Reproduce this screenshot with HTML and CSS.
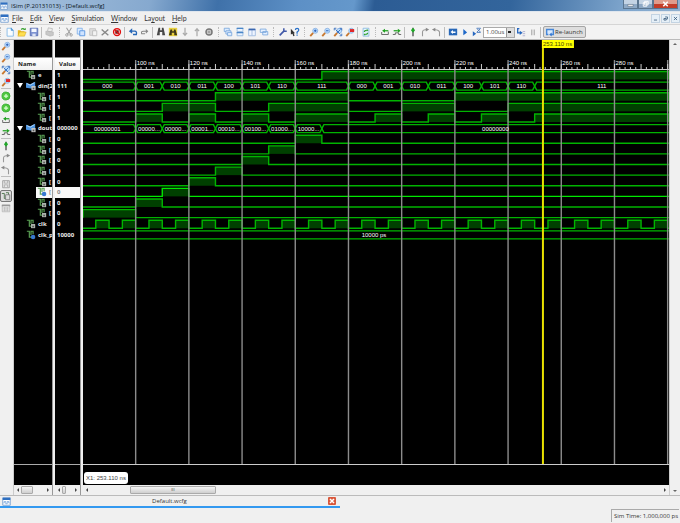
FILE: index.html
```html
<!DOCTYPE html>
<html lang="en">
<head>
   <meta charset="UTF-8">
   <meta name="viewport" content="width=device-width, initial-scale=1.0">
   <title>ISim (P.20131013) - [Default.wcfg]</title>
   <link rel="stylesheet" href="styles.css">
</head>
<body>
   <svg class="symbols" aria-hidden="true">
      <symbol id="app" viewBox="0 0 12 12"><path d="M1 1h10v10H1z" fill="#fff" stroke="#5f8fc8"/><path d="M1 1h10v3H1z" fill="#2f6fc0"/><path d="M2 8h1V6h2v3h2V6h2v2h1" fill="none" stroke="#6f9fd8"/></symbol>
      <symbol id="new" viewBox="0 0 12 12"><path d="M2.500 1.500h5l2.500 2.500v7h-7.500z" fill="#fafdff" stroke="#7db4e6"/><path d="M7.500 1v3H10" fill="#5fa3e0" stroke="#4a90d0"/></symbol>
      <symbol id="open" viewBox="0 0 12 12"><path d="M1 4h3l1 1h4v5H1z" fill="#e8b820"/><path d="M3 6h8l-2 5H1z" fill="#ffdf50" stroke="#c89a10" stroke-width=".5"/><path d="M5 3q2-2 4 0" fill="none" stroke="#3aa030" stroke-width="1.500"/><path d="M7.500 3.500h3V1z" fill="#3aa030"/></symbol>
      <symbol id="save" viewBox="0 0 12 12"><path d="M1.500 1.500h9v9h-9z" fill="#7f94d2" stroke="#5268b0"/><path d="M3 2h6v4H3z" fill="#f4f7ff"/><path d="M4 8h4v3H4z" fill="#dfe5f5"/></symbol>
      <symbol id="print" viewBox="0 0 12 12"><path d="M4 1l5 1-1 4-5-1z" fill="#eee" stroke="#bbb"/><path d="M1 5l9 1v4l-4 1-5-2z" fill="#c8c8c8" stroke="#aaa" stroke-width=".6"/></symbol>
      <symbol id="cut" viewBox="0 0 12 12"><path d="M3 1l5 8M9 1L4 9" stroke="#a0a0a0" stroke-width="1.300"/><g fill="none" stroke="#999"><circle cx="3.500" cy="9.500" r="1.500"/><circle cx="8.500" cy="9.500" r="1.500"/></g></symbol>
      <symbol id="copy" viewBox="0 0 12 12"><path d="M1.500 1.500h6v7h-6z" fill="#dcebff" stroke="#7dafe8"/><path d="M4.500 4.500h6v6h-6z" fill="#cfe3ff" stroke="#4f8fe0"/></symbol>
      <symbol id="paste" viewBox="0 0 12 12"><path d="M2 2h7v8H2z" fill="#ddd" stroke="#c0c0c0"/><path d="M5.500 4.500h5v6h-5z" fill="#f3f3f3" stroke="#bbb"/></symbol>
      <symbol id="delete" viewBox="0 0 12 12"><path d="M2 3l8 7M10 3l-8 7" stroke="#888" stroke-width="1.600"/></symbol>
      <symbol id="nobp" viewBox="0 0 12 12"><circle cx="6" cy="6" r="4.200" fill="#fbb" stroke="#e01010" stroke-width="1.500"/><path d="M4 4h4v4H4z" fill="#502020"/><path d="M3 3l6 6" stroke="#e01010" stroke-width="1.300"/></symbol>
      <symbol id="undo" viewBox="0 0 12 12"><path d="M4 5h4q3 0 2 4H6" fill="none" stroke="#2868b8" stroke-width="1.600"/><path d="M1 5l4-3.500V8z" fill="#2868b8"/></symbol>
      <symbol id="redo" viewBox="0 0 12 12"><path d="M8 5H4q-3 0-2 3h4" fill="none" stroke="#888" stroke-width="1.300"/><path d="M10 5L7 2.500V8z" fill="#888"/></symbol>
      <symbol id="find" viewBox="0 0 12 12"><path d="M3 1h2v3h2V1h2l2 9H7.500V6h-3v4H1z" fill="#484848"/></symbol>
      <symbol id="findfiles" viewBox="0 0 12 12"><path d="M1 1h10v10H1z" fill="#e8d040"/><path d="M3 3h2v2h2V3h2l2 7H7.500V7h-3v3H1z" fill="#403818"/></symbol>
      <symbol id="down" viewBox="0 0 12 12"><path d="M6 1v8M3.500 7L6 10l2.500-3" fill="none" stroke="#aaa" stroke-width="1.500"/></symbol>
      <symbol id="up" viewBox="0 0 12 12"><path d="M6 11V3M3.500 5L6 2l2.500 3" fill="none" stroke="#aaa" stroke-width="1.500"/></symbol>
      <symbol id="goto" viewBox="0 0 12 12"><circle cx="6" cy="6" r="3.600" fill="#ddd" stroke="#777" stroke-width="1.800"/><path d="M4 6h4M6 4v4" stroke="#888"/></symbol>
      <symbol id="cascade" viewBox="0 0 12 12"><g fill="#dcecff" stroke="#78a6dc"><path d="M1.500 1.500h6v4h-6z"/><path d="M3.500 4.500h6v4h-6z"/><path d="M5.500 6.500h5v4h-5z"/></g></symbol>
      <symbol id="tileh" viewBox="0 0 12 12"><path d="M2.500 1.500h7v4h-7zM2.500 6.500h7v4h-7z" fill="#eaf3ff" stroke="#8fb4e0"/><path d="M2 1h8v1.500H2zM2 6h8v1.500H2z" fill="#4a86c8"/></symbol>
      <symbol id="tilev" viewBox="0 0 12 12"><path d="M2 2.500h8v8H2zM6 3v7" fill="#eef4ff" stroke="#9bb8dd"/><path d="M2 2h8v2H2z" fill="#3c68b0"/></symbol>
      <symbol id="float" viewBox="0 0 12 12"><path d="M1.500 2.500h7v4h-7zM4.500 5.500h6v4h-6z" fill="#e6f1ff" stroke="#78a6dc"/></symbol>
      <symbol id="wrench" viewBox="0 0 12 12"><path d="M2 10l5-5" stroke="#4058a8" stroke-width="2"/><path d="M7 1.500v3.500h3.500" fill="none" stroke="#4058a8" stroke-width="1.800"/></symbol>
      <symbol id="help" viewBox="0 0 12 12"><path d="M1 2v7l2-1 1 3 1.500-.5-1-3H6z" fill="#333"/><path d="M6.500 3.500q0-2 2-2t2 2q0 1-2 2.500v2M8.500 9v1.500" fill="none" stroke="#2870c8" stroke-width="1.500"/></symbol>
      <symbol id="lens" viewBox="0 0 12 12"><path d="M1.500 11L5 7" stroke="#c87830" stroke-width="2.200"/><circle cx="7.500" cy="4.500" r="3" fill="#b8dcff" stroke="#88aee0"/></symbol>
      <symbol id="zoomin" viewBox="0 0 12 12"><use href="#lens"/><path d="M6 4.500h3M7.500 3v3" stroke="#1f50b0"/></symbol>
      <symbol id="zoomout" viewBox="0 0 12 12"><use href="#lens"/><path d="M6 4.500h3" stroke="#1f50b0"/></symbol>
      <symbol id="zoomfit" viewBox="0 0 12 12"><use href="#lens"/><path d="M1.500 4V1.500H4M8 1.500h2.500V4M10.500 8v2.500H8M3 3l6 6M9 3L5 7" fill="none" stroke="#2460b8"/></symbol>
      <symbol id="zoomcur" viewBox="0 0 12 12"><use href="#lens"/><path d="M6 2.500h5v3.500H6z" fill="#e02828"/></symbol>
      <symbol id="refresh" viewBox="0 0 12 12"><path d="M2.500 1.500h7v9.500h-7z" fill="#e8f5ff" stroke="#85b8e0"/><path d="M4 6q0-2 3-2M8 7q0 2-3 2" fill="none" stroke="#30a030" stroke-width="1.300"/><path d="M7 2.500v3l2-1.500zM5 7.500v3L3 9z" fill="#30a030"/></symbol>
      <symbol id="prevedge" viewBox="0 0 12 12"><path d="M2 6v3h8V5.500" fill="none" stroke="#555"/><path d="M5 4.500h5" stroke="#20a020" stroke-width="1.500"/><path d="M6 2v5L2.500 4.500z" fill="#20a020"/></symbol>
      <symbol id="nextedge" viewBox="0 0 12 12"><path d="M1 9h3V7h4v2h3" fill="none" stroke="#555"/><path d="M2 4.500h5" stroke="#20a020" stroke-width="1.500"/><path d="M7 2v5l3.500-2.500z" fill="#20a020"/></symbol>
      <symbol id="marker" viewBox="0 0 12 12"><path d="M6 1v10" stroke="#444" stroke-width="1.500"/><path d="M3.500 4L6 1l2.500 3L6 7z" fill="#20a828"/></symbol>
      <symbol id="prevmark" viewBox="0 0 12 12"><path d="M3 11V6q0-3 6-3" fill="none" stroke="#999" stroke-width="1.300"/><path d="M7 1v4.500L11 3z" fill="#888"/></symbol>
      <symbol id="nextmark" viewBox="0 0 12 12"><path d="M1 3q7 0 8 3v5" fill="none" stroke="#999" stroke-width="1.300"/><path d="M4 1v4.500L0 3z" fill="#888"/></symbol>
      <symbol id="addmark" viewBox="0 0 12 12"><circle cx="6" cy="6" r="4.800" fill="#4fc840" stroke="#35aa30"/><path d="M3.500 6h5M6 3.500v5" stroke="#d8ffd0" stroke-width="1.500"/></symbol>
      <symbol id="restart" viewBox="0 0 12 12"><path d="M1 2h10v8H1z" fill="#2868b8"/><path d="M6 3.500v5L3 6zM6 5.300h3v2H6" fill="#fff"/></symbol>
      <symbol id="run" viewBox="0 0 12 12"><path d="M4 2.500L8.500 6.500 4 10z" fill="#1f68c8"/></symbol>
      <symbol id="runfor" viewBox="0 0 12 12"><path d="M1 5l4 3-4 3z" fill="#2868c0"/><path d="M5.500 1.500h5M5.500 6.500h5M6 2l4 4M10 2L6 6" fill="none" stroke="#3c70b8"/></symbol>
      <symbol id="step" viewBox="0 0 12 12"><path d="M4 2H2v5h3" fill="none" stroke="#2868c0" stroke-width="1.600"/><path d="M4.500 4.500v5L8 7z" fill="#2868c0"/><path d="M8 5.500h3M8 8h3M8 10.500h3" stroke="#aac"/></symbol>
      <symbol id="pause" viewBox="0 0 12 12"><path d="M4.500 3v7M7.500 3v7" stroke="#b0b0b0" stroke-width="1.500"/></symbol>
      <symbol id="relaunch" viewBox="0 0 12 12"><path d="M4 9H2V3h8v6H7" fill="#d8eaff" stroke="#4888d8" stroke-width="1.700"/><path d="M8 6.500v5L5 9z" fill="#3878d0"/></symbol>
      <symbol id="disk" viewBox="0 0 12 12"><path d="M2 2h8v8.500H2z" fill="#e8e8e8" stroke="#999"/><path d="M4 2v3h4V2M4 10V7h4v3" fill="none" stroke="#aaa"/></symbol>
      <symbol id="snap" viewBox="0 0 12 12"><path d="M1 3h3v6h3M6 2h3v3" fill="none" stroke="#447044"/><path d="M5.500 4.500h5v6h-5z" fill="#ddd" stroke="#777"/></symbol>
      <symbol id="grid" viewBox="0 0 12 12"><path d="M1.500 2.500h9v8h-9zM2 6h8M2 8.500h8M4.500 5v5M7.500 5v5" fill="#f7f7f7" stroke="#b5b5b5"/><path d="M1 2h10v2H1z" fill="#999"/></symbol>
      <symbol id="sig" viewBox="0 0 12 12"><path d="M1 1.500h3v7h3M6 6V1.500h2.500V5" fill="none" stroke="#5aa054" stroke-width="1.400"/><path d="M6 6h5v5H6z" fill="#aab0aa"/><path d="M7.500 8h2v2h-2z" fill="#555"/></symbol>
      <symbol id="const" viewBox="0 0 12 12"><path d="M1 1.500h3v7h3M6 6V1.500h2.500V5" fill="none" stroke="#5aa054" stroke-width="1.400"/><circle cx="8.500" cy="8.500" r="2.700" fill="#3878d0"/></symbol>
      <symbol id="bus" viewBox="0 0 12 12"><path d="M0 2l5 2 6-3v7L6 9 0 8z" fill="#4d94e0"/><path d="M1 3l4 2 5-3" fill="none" stroke="#c4e2ff"/><path d="M6.500 6h5v5h-5z" fill="#c4c4c4"/><path d="M8 8h2v2H8z" fill="#555"/></symbol>
      <symbol id="left" viewBox="0 0 6 6"><path d="M4 1v4L2 3z" fill="#444"/></symbol>
      <symbol id="right" viewBox="0 0 6 6"><path d="M2 1v4l2-2z" fill="#444"/></symbol>
   </svg>

   <header class="titlebar">
      <svg class="app-icon"><use href="#app"/></svg>
      <h1>ISim (P.20131013) - [Default.wcfg]</h1>
      <div class="window-buttons">
         <button aria-label="Minimize"><svg viewBox="0 0 14 9"><path d="M4 5h6v2H4z" fill="#fff" stroke="#456" stroke-width=".5"/></svg></button>
         <button aria-label="Restore"><svg viewBox="0 0 14 9"><path d="M6 1.500h4v4H6zM4.500 3h4v4h-4z" fill="none" stroke="#fff"/></svg></button>
         <button class="close" aria-label="Close"><svg viewBox="0 0 14 9"><path d="M4.500 2l5 5M9.500 2l-5 5" stroke="#fff" stroke-width="1.700"/></svg></button>
      </div>
   </header>

   <nav class="menubar">
      <svg class="app-icon"><use href="#app"/></svg>
      <button><u>F</u>ile</button>
      <button><u>E</u>dit</button>
      <button><u>V</u>iew</button>
      <button><u>S</u>imulation</button>
      <button><u>W</u>indow</button>
      <button>La<u>y</u>out</button>
      <button><u>H</u>elp</button>
      <div class="mdi-buttons">
         <button aria-label="Minimize document"><svg viewBox="0 0 9 9"><path d="M2.500 6.500h4" stroke="#357"/></svg></button>
         <button aria-label="Restore document"><svg viewBox="0 0 9 9"><path d="M4 2.500h3v3M2.500 4.500h3v2h-3z" fill="none" stroke="#357"/></svg></button>
         <button aria-label="Close document"><svg viewBox="0 0 9 9"><path d="M2.500 2.500l4 4M6.500 2.500l-4 4" stroke="#357"/></svg></button>
      </div>
   </nav>

   <div class="toolbar">
      <div class="group">
         <button aria-label="New"><svg><use href="#new"/></svg></button>
         <button aria-label="Open"><svg><use href="#open"/></svg></button>
         <button aria-label="Save"><svg><use href="#save"/></svg></button>
         <span class="sep"></span>
         <button aria-label="Print"><svg><use href="#print"/></svg></button>
      </div>
      <div class="group">
         <button aria-label="Cut"><svg><use href="#cut"/></svg></button>
         <button aria-label="Copy"><svg><use href="#copy"/></svg></button>
         <button aria-label="Paste"><svg><use href="#paste"/></svg></button>
         <button aria-label="Delete"><svg><use href="#delete"/></svg></button>
         <button aria-label="Delete all breakpoints"><svg><use href="#nobp"/></svg></button>
         <span class="sep"></span>
         <button aria-label="Undo"><svg><use href="#undo"/></svg></button>
         <button aria-label="Redo"><svg><use href="#redo"/></svg></button>
         <span class="sep"></span>
         <button aria-label="Find"><svg><use href="#find"/></svg></button>
         <button aria-label="Find in files"><svg><use href="#findfiles"/></svg></button>
         <button aria-label="Find next"><svg><use href="#down"/></svg></button>
         <button aria-label="Find previous"><svg><use href="#up"/></svg></button>
         <button aria-label="Go to"><svg><use href="#goto"/></svg></button>
      </div>
      <div class="group">
         <button aria-label="Cascade"><svg><use href="#cascade"/></svg></button>
         <button aria-label="Tile horizontally"><svg><use href="#tileh"/></svg></button>
         <button aria-label="Tile vertically"><svg><use href="#tilev"/></svg></button>
         <button aria-label="Float"><svg><use href="#float"/></svg></button>
      </div>
      <div class="group">
         <button aria-label="Preferences"><svg><use href="#wrench"/></svg></button>
         <button aria-label="What's this"><svg><use href="#help"/></svg></button>
      </div>
      <div class="group">
         <button aria-label="Zoom in"><svg><use href="#zoomin"/></svg></button>
         <button aria-label="Zoom out"><svg><use href="#zoomout"/></svg></button>
         <button aria-label="Zoom to full view"><svg><use href="#zoomfit"/></svg></button>
         <button aria-label="Zoom to cursor"><svg><use href="#zoomcur"/></svg></button>
         <span class="sep"></span>
         <button aria-label="Refresh"><svg><use href="#refresh"/></svg></button>
      </div>
      <div class="group">
         <button aria-label="Previous transition"><svg><use href="#prevedge"/></svg></button>
         <button aria-label="Next transition"><svg><use href="#nextedge"/></svg></button>
         <span class="sep"></span>
         <button aria-label="Add marker"><svg><use href="#marker"/></svg></button>
         <button aria-label="Previous marker"><svg><use href="#prevmark"/></svg></button>
         <button aria-label="Next marker"><svg><use href="#nextmark"/></svg></button>
         <span class="sep"></span>
         <button aria-label="Restart"><svg><use href="#restart"/></svg></button>
         <button aria-label="Run all"><svg><use href="#run"/></svg></button>
         <button aria-label="Run for time"><svg><use href="#runfor"/></svg></button>
         <select class="run-time" aria-label="Run time"><option>1.00us</option></select>
         <button aria-label="Step"><svg><use href="#step"/></svg></button>
         <button aria-label="Break"><svg><use href="#pause"/></svg></button>
         <span class="sep"></span>
         <button class="relaunch"><svg><use href="#relaunch"/></svg>Re-launch</button>
      </div>
   </div>

   <main>
      <div class="side-tools">
         <button aria-label="Zoom in"><svg><use href="#zoomin"/></svg></button>
         <button aria-label="Zoom out"><svg><use href="#zoomout"/></svg></button>
         <button aria-label="Zoom to full view"><svg><use href="#zoomfit"/></svg></button>
         <button aria-label="Zoom to cursor"><svg><use href="#zoomcur"/></svg></button>
         <span class="sep"></span>
         <button aria-label="Go to time 0"><svg><use href="#addmark"/></svg></button>
         <button aria-label="Go to latest time"><svg><use href="#addmark"/></svg></button>
         <button aria-label="Previous transition"><svg><use href="#prevedge"/></svg></button>
         <button aria-label="Next transition"><svg><use href="#nextedge"/></svg></button>
         <span class="sep"></span>
         <button aria-label="Add marker"><svg><use href="#marker"/></svg></button>
         <button aria-label="Previous marker"><svg><use href="#prevmark"/></svg></button>
         <button aria-label="Next marker"><svg><use href="#nextmark"/></svg></button>
         <span class="sep"></span>
         <button aria-label="Swap cursors"><svg><use href="#disk"/></svg></button>
         <button class="active" aria-label="Snap to transition"><svg><use href="#snap"/></svg></button>
         <button aria-label="Floating ruler"><svg><use href="#grid"/></svg></button>
      </div>

      <section class="pane names">
         <h2>Name</h2>
         <ul id="names"></ul>
         <div class="rest"></div>
         <div class="scroll"><svg><use href="#left"/></svg><span class="track"><span class="thumb"></span></span><svg><use href="#right"/></svg></div>
      </section>
      <div class="splitter"></div>
      <section class="pane values">
         <h2>Value</h2>
         <ul id="values"></ul>
         <div class="rest"></div>
         <div class="scroll"><svg><use href="#left"/></svg><span class="track"><span class="thumb"></span></span><svg><use href="#right"/></svg></div>
      </section>
      <div class="splitter"></div>
      <section class="pane waves">
         <div class="canvas">
            <svg id="wave"></svg>
            <div class="cursor-info">X1: 253.110 ns</div>
         </div>
         <div class="scroll"><svg><use href="#left"/></svg><span class="track"><span class="thumb">III</span></span><svg><use href="#right"/></svg></div>
      </section>
      <div class="vscroll">
         <svg viewBox="0 0 6 6"><path d="M1 4h4L3 2z" fill="#666"/></svg>
         <svg viewBox="0 0 6 6"><path d="M1 2h4L3 4z" fill="#666"/></svg>
      </div>
   </main>

   <div class="tabs">
      <div class="tab">
         <svg class="app-icon"><use href="#app"/></svg>
         <a href="#wave">Default.wcfg</a>
         <button aria-label="Close tab"><svg viewBox="0 0 8 8"><path d="M2 2l4 4M6 2L2 6" stroke="#fff" stroke-width="1.500"/></svg></button>
      </div>
   </div>

   <footer class="statusbar">
      <span>Sim Time: 1,000,000 ps</span>
   </footer>
   <script src="script.js"></script>
</body>
</html>
```
FILE: styles.css
```css
*{
   margin: 0;
   padding: 0;
   box-sizing: border-box;
}
body{
   display: flex;
   flex-direction: column;
   height: 100vh;
   overflow: hidden;
   background: #f0f0f0;
   color: #333;
   font-family: "Open Sans", "Noto Sans", sans-serif;
   font-size: 6px;
   line-height: 10px;
}
button{
   border: 0;
   background: none;
   font: inherit;
   color: inherit;
}
svg{
   display: block;
}
a{
   color: inherit;
   text-decoration: none;
}
ul{
   list-style: none;
}
.symbols{
   display: none;
}
.app-icon{
   width: 9px;
   height: 9px;
   flex: none;
}
/* title bar */
.titlebar{
   display: flex;
   align-items: center;
   height: 11px;
   flex: none;
   background: linear-gradient(100deg, #a9c3de 0%, #86a9cf 22%, #3f71a9 32%, #5d90c6 44%, #6598cb 52%, #2c5c94 55%, #33659c 75%, #7fa6cd 92%, #8fb0d0 100%);
}
.titlebar .app-icon{
   width: 8px;
   height: 8px;
}
.titlebar h1{
   margin-left: 3px;
   flex: 1;
   font-size: 6px;
   font-weight: normal;
   color: #0c1622;
}
.window-buttons{
   display: flex;
   align-self: flex-start;
   height: 9px;
   margin-right: 2px;
}
.window-buttons button{
   width: 15px;
   height: 9px;
   background: linear-gradient(#c3d3e4 45%, #8ea9c5 50%);
   border: 1px solid #5b7690;
   border-top: 0;
}
.window-buttons .close{
   width: 25px;
   background: linear-gradient(#e09c8c 45%, #c33d28 50%);
}
.window-buttons svg{
   width: 100%;
   height: 8px;
}
/* menu */
.menubar{
   display: flex;
   align-items: center;
   gap: 7px;
   height: 13px;
   flex: none;
   border-top: 1px solid #dfe6ee;
   font-family: Lato, "Open Sans", sans-serif;
   font-size: 7px;
}
.menubar .app-icon{
   margin-right: -4px;
}
.mdi-buttons{
   display: flex;
   gap: 1px;
   margin-left: auto;
}
.mdi-buttons button{
   width: 9px;
   height: 9px;
   background: #e6f0f8;
   border: 1px solid #c3d3e2;
}
.mdi-buttons svg{
   width: 7px;
   height: 7px;
}
/* toolbar */
.toolbar{
   display: flex;
   gap: 3px;
   height: 16px;
   flex: none;
   background: #f3f3f3;
   border-top: 1px solid #d5d5d5;
   border-bottom: 1px solid #bbb;
}
.group{
   display: flex;
   align-items: center;
}
.group::before{
   content: '';
   width: 3px;
   height: 10px;
   border-left: 1px dotted #bbb;
}
.group button, .side-tools button{
   width: 12px;
   height: 12px;
   padding: 1px;
   flex: none;
}
.group button svg, .side-tools button svg{
   width: 10px;
   height: 10px;
}
.sep{
   width: 1px;
   height: 11px;
   margin: 0 2px 0 1px;
   background: #bdbdbd;
}
.run-time{
   width: 32px;
   height: 11px;
   padding-left: 2px;
   appearance: none;
   font: inherit;
   line-height: 9px;
   color: #444;
   border: 1px solid #aaa;
   border-radius: 0;
   background: linear-gradient(#222, #222) right 3px center / 3px 2px no-repeat, linear-gradient(90deg, #fff 22px, #999 22px, #999 23px, #dedede 23px);
}
.group .relaunch{
   display: flex;
   align-items: center;
   width: auto;
   height: 12px;
   padding: 0 2px 0 1px;
   border: 1px solid #a5a5a5;
   border-radius: 2px;
   background: #dedede;
   color: #333;
}
/* work area */
main{
   flex: 1;
   min-height: 0;
   display: grid;
   grid-template-columns: 14px 38px 3px 25px 3px 1fr 11px;
}
.side-tools{
   border-right: 1px solid #ccc;
}
.side-tools button{
   display: block;
}
.side-tools .sep{
   display: block;
   width: 10px;
   height: 1px;
   margin: 0 1px 1px;
}
.side-tools .active{
   border: 1px solid #777;
   border-radius: 2px;
   padding: 0;
   background: #ddd;
}
.pane{
   display: flex;
   flex-direction: column;
   min-width: 0;
   background: #000;
   overflow: hidden;
}
.pane h2{
   height: 13px;
   margin-top: 17px;
   padding: 0 4px;
   flex: none;
   border-top: 1px solid #888;
   background: linear-gradient(#fff, #f1f1f1);
   color: #222;
   font: bold 6px/12px "Open Sans", sans-serif;
}
.pane ul{
   display: grid;
   grid-template-rows: repeat(16, 1fr);
   height: 170px;
   flex: none;
   color: #eee;
   font: bold 6px/10px "Open Sans", sans-serif;
}
.pane li{
   display: flex;
   align-items: center;
   min-height: 0;
   white-space: nowrap;
   overflow: hidden;
}
.names li{
   padding-left: 12px;
}
.names li.child{
   margin-left: 22px;
   padding-left: 1px;
}
.names li svg{
   width: 10px;
   height: 10px;
   margin-right: 2px;
   flex: none;
}
.names li.bus{
   padding-left: 3px;
}
.names li.bus::before{
   content: '';
   margin-right: 3px;
   border: 3px solid transparent;
   border-top: 5px solid #fff;
   border-bottom: 0;
}
.values li{
   padding-left: 2px;
}
.pane li.selected{
   background: #f8f8f8;
   color: #888;
}
.rest{
   flex: 1;
   margin-bottom: 20px;
   border-bottom: 1px solid #aaa;
}
.splitter{
   background: #f0f0f0;
   border-left: 1px solid #999;
}
/* scroll bars */
.scroll{
   display: flex;
   align-items: center;
   height: 10px;
   padding: 0 1px;
   flex: none;
   background: #f0f0f0;
}
.scroll svg{
   width: 6px;
   height: 6px;
   flex: none;
}
.track{
   flex: 1;
}
.thumb{
   display: block;
   width: 50%;
   height: 8px;
   border: 1px solid #aaa;
   border-radius: 1px;
   background: linear-gradient(#f4f4f4, #cfcfcf);
   font-size: 4px;
   line-height: 6px;
   text-align: center;
}
.values .thumb{
   width: 4px;
}
.waves .thumb{
   width: 15%;
   margin-left: 7%;
}
.vscroll{
   display: flex;
   flex-direction: column;
   justify-content: space-between;
   align-items: center;
   padding: 1px 0;
   border-left: 1px solid #ccc;
}
.vscroll svg{
   width: 6px;
   height: 6px;
}
/* waveforms */
.canvas{
   position: relative;
   flex: 1;
   min-height: 0;
}
#wave{
   position: absolute;
   width: 100%;
   height: 100%;
   font: 6px "Liberation Sans", sans-serif;
}
.cursor-info{
   position: absolute;
   left: 1px;
   bottom: 1px;
   padding: 1px 2px;
   border-radius: 3px;
   background: #fff;
   color: #444;
   font: 6px/10px "Liberation Sans", sans-serif;
}
.fill{
   fill: #004000;
}
.line{
   fill: none;
   stroke: #00b400;
   stroke-width: 1.4;
}
.line.selected{
   stroke: #00e800;
}
.gridline{
   stroke: #8c8c8c;
   stroke-width: 1.4;
}
.tick{
   stroke: #ccc;
}
.label{
   fill: #fff;
}
.bus-text{
   fill: #fff;
   text-anchor: middle;
}
.cursor{
   stroke: #e8e000;
   stroke-width: 2;
}
.cursor-flag{
   fill: #ff0;
}
.cursor-text{
   fill: #444400;
}
/* document tabs and status */
.tabs{
   height: 12px;
   flex: none;
   border-top: 1px solid #bbb;
}
.tab{
   display: flex;
   align-items: center;
   width: 50%;
   height: 12px;
   padding: 0 4px 0 2px;
   border-bottom: 2px solid #3399f0;
}
.tab a{
   flex: 1;
   text-align: center;
}
.tab button{
   width: 8px;
   height: 8px;
   border-radius: 1px;
   background: #d9583c;
}
.statusbar{
   display: flex;
   justify-content: flex-end;
   height: 16px;
   padding: 2px 1px 1px;
   flex: none;
}
.statusbar span{
   padding: 1px 1px 0 2px;
   border-top: 1px solid #aaa;
   border-left: 1px solid #aaa;
   line-height: 11px;
}
```
FILE: script.js
```js
const START = 80.2;      // time at the left edge, ns
const SCALE = 2.66;      // pixels per ns
const TOP = 30;          // first row
const ROW = 170 / 16;

const wave = document.querySelector('#wave');
const width = wave.clientWidth;
const height = wave.clientHeight;
const END = START + width / SCALE;
const base = height - 21;
const x = (t) => (t - START) * SCALE;

const din = [[0,'000'],[100,'001'],[110,'010'],[120,'011'],[130,'100'],[140,'101'],[150,'110'],[160,'111'],
             [180,'000'],[190,'001'],[200,'010'],[210,'011'],[220,'100'],[230,'101'],[240,'110'],[250,'111']];
const dout = [[0,'00000001'],[100,'00000...'],[110,'00000...'],[120,'00001...'],[130,'00010...'],
              [140,'00100...'],[150,'01000...'],[160,'10000...'],[170,'00000000']];
const clk = [];
for(let t = 85; t < END; t += 10){
   clk.push([t, t + 5]);
}

const signals = [
   {name: 'e', value: '1', high: [[170, END]]},
   {name: 'din[2', value: '111', bus: din},
   {name: '[', value: '1', child: true, high: [[130,180],[220,END]]},
   {name: '[', value: '1', child: true, high: [[110,130],[150,180],[200,220],[240,END]]},
   {name: '[', value: '1', child: true, high: [[100,110],[120,130],[140,150],[160,180],[190,200],[210,220],[230,240],[250,END]]},
   {name: 'dout', value: '000000', bus: dout},
   {name: '[', value: '0', child: true, high: [[160,170]]},
   {name: '[', value: '0', child: true, high: [[150,160]]},
   {name: '[', value: '0', child: true, high: [[140,150]]},
   {name: '[', value: '0', child: true, high: [[130,140]]},
   {name: '[', value: '0', child: true, high: [[120,130]]},
   {name: '[', value: '0', child: true, selected: true, high: [[110,120]]},
   {name: '[', value: '0', child: true, high: [[100,110]]},
   {name: '[', value: '0', child: true, high: [[START,100]]},
   {name: 'clk', value: '0', high: clk},
   {name: 'clk_p', value: '10000', constant: true, bus: [[0,'10000 ps']]}
];

let names = '';
let values = '';
let fills = '';
let lines = '';
let texts = '';

signals.forEach((s, i) => {
   const isBus = s.bus && !s.constant;
   const icon = isBus ? 'bus' : (s.constant || s.selected ? 'const' : 'sig');
   const cls = [isBus ? 'bus' : '', s.child ? 'child' : '', s.selected ? 'selected' : ''].join(' ').trim();
   names += `<li class="${cls}"><svg><use href="#${icon}"/></svg>${s.name}</li>`;
   values += `<li class="${s.selected ? 'selected' : ''}">${s.value}</li>`;

   const hi = TOP + i * ROW + 1.5;
   const lo = hi + 8;
   const mid = (hi + lo) / 2;
   if(s.bus){
      s.bus.forEach(([t, text], n) => {
         const last = n == s.bus.length - 1;
         const a = Math.max(x(t), -4);
         const b = last ? width + 4 : x(s.bus[n + 1][0]);
         lines += `<path class="line" d="M${a} ${mid}L${a + 2} ${hi}H${b - 2}L${b} ${mid}L${b - 2} ${lo}H${a + 2}Z"/>`;
         const from = Math.max(a, 0) - (n == 0 ? 4 : 0);
         texts += `<text class="bus-text" x="${(from + Math.min(b, width)) / 2}" y="${mid + 2}">${text}</text>`;
      });
   }else{
      let d = `M0 ${lo}`;
      s.high.forEach(([a, b]) => {
         d += `H${x(a)}V${hi}H${x(b)}V${lo}`;
         fills += `<rect class="fill" x="${x(a)}" y="${hi}" width="${x(b) - x(a)}" height="8"/>`;
      });
      lines += `<path class="line ${s.selected ? 'selected' : ''}" d="${d}H${width}"/>`;
   }
});

let ruler = '';
let grid = '';
for(let t = 82; t < END; t += 2){
   ruler += `<path class="tick" d="M${x(t)} 29V${t % 10 ? 27 : 24}"/>`;
   if(t % 20 == 0){
      grid += `<path class="gridline" d="M${x(t)} 20V${base}"/>`;
      // skip a label that would start outside the view
      if(x(t) + 4 < width){
         ruler += `<text class="label" x="${x(t) + 1}" y="25">${t} ns</text>`;
      }
   }
}
ruler += `<path class="tick" d="M0 29.5H${width}M0 ${base + .5}H${width}"/>`;

const cx = x(253.11);
const cursor = `<path class="cursor" d="M${cx} 0V${base}"/>
   <rect class="cursor-flag" x="${cx - 1}" y="0" width="32" height="8"/>
   <text class="cursor-text" x="${cx}" y="6">253.110 ns</text>`;

document.querySelector('#names').innerHTML = names;
document.querySelector('#values').innerHTML = values;
wave.innerHTML = fills + lines + grid + ruler + texts + cursor;
```
